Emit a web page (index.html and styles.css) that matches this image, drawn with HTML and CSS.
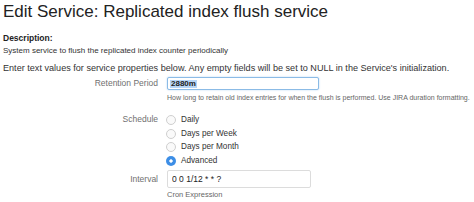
FILE: index.html
```html
<!DOCTYPE html>
<html>
<head>
  <title>Edit Service</title>
  <link rel="stylesheet" href="styles.css">
</head>
<body>
  <h1>Edit Service: Replicated index flush service</h1>
  <div class="desc">
      <b>Description:</b><br>
      System service to flush the replicated index counter periodically
  </div>
  <p class="intro">Enter text values for service properties below. Any empty fields will be set to NULL in the Service's initialization.</p>
  <div class="form">
      <div class="row">
          <label class="field-label">Retention Period</label>
          <div class="field">
              <input class="text focused" id="retention" type="text" value="2880m">
              <div class="hint">How long to retain old index entries for when the flush is performed. Use JIRA duration formatting.</div>
          </div>
      </div>
      <div class="row schedule">
          <label class="field-label">Schedule</label>
          <div class="field radios">
              <label class="radio"><input type="radio" name="sched"> Daily</label>
              <label class="radio"><input type="radio" name="sched"> Days per Week</label>
              <label class="radio"><input type="radio" name="sched"> Days per Month</label>
              <label class="radio"><input type="radio" name="sched" checked> Advanced</label>
          </div>
      </div>
      <div class="row interval">
          <label class="field-label">Interval</label>
          <div class="field">
              <input class="text big" type="text" value="0 0 1/12 * * ?">
              <div class="hint">Cron Expression</div>
          </div>
      </div>
  </div>
</body>
</html>
```

FILE: styles.css
```css
body {
    font-family: "Liberation Sans", Arial, sans-serif;
    font-size: 8px;
    color: #333;
    margin: 0;
    padding: 2px 3px 0 3px;
    background: #fff;
}
h1 {
    font-size: 17px;
    font-weight: normal;
    color: #222;
    line-height: 20px;
    margin: 0 0 10px 0;
}
.desc {
    line-height: 12px;
}
.desc b {
    color: #222;
    font-size: 8.5px;
}
.intro {
    font-size: 9.1px;
    line-height: 12px;
    margin: 5px 0 3px 0;
}
.row {
    display: grid;
    grid-template-columns: 155px 1fr;
    column-gap: 9px;
}
.field-label {
    font-size: 8.5px;
    text-align: right;
    color: #707070;
    line-height: 13px;
}
.text {
    font-family: "Liberation Sans", Arial, sans-serif;
    font-size: 8px;
    color: #222;
    box-sizing: border-box;
    display: block;
    width: 152px;
    height: 13px;
    padding: 0 3px;
    margin: 0;
    border: 1px solid #d0d0d0;
    border-radius: 2px;
    outline: none;
}
/* selected value, as in the focused field */
.text.focused {
    font-weight: bold;
    border-color: #8bbbe6;
    box-shadow: 0 0 2px #b3d3f1;
    background: #fff linear-gradient(#b7d6f6, #b7d6f6) no-repeat 2px 2px / 27px 8px;
}
.hint {
    font-size: 7px;
    line-height: 9px;
    color: #666;
    margin-top: 3px;
}
.schedule {
    margin-top: 11px;
}
.radios {
    display: flex;
    flex-direction: column;
}
.radio {
    display: flex;
    align-items: center;
    gap: 5px;
    height: 13.7px;
    line-height: 13.7px;
    font-size: 8.2px;
    color: #333;
}
.radio input {
    appearance: none;
    box-sizing: border-box;
    margin: 0 0 0 -1px;
    width: 10px;
    height: 10px;
    border: 1px solid #cfcfcf;
    border-radius: 50%;
    background: #fafafa;
}
.radio input:checked {
    border: none;
    background: radial-gradient(circle, #fff 0 1.4px, #3d8ee6 1.9px);
}
.interval {
    margin-top: 2px;
}
.interval .field-label {
    line-height: 18px;
}
.text.big {
    width: 144px;
    height: 18px;
    font-size: 8.5px;
    padding: 0 4px;
    border-color: #dcdcdc;
}
.interval .hint {
    font-size: 7.5px;
    margin-top: 2px;
}
```
